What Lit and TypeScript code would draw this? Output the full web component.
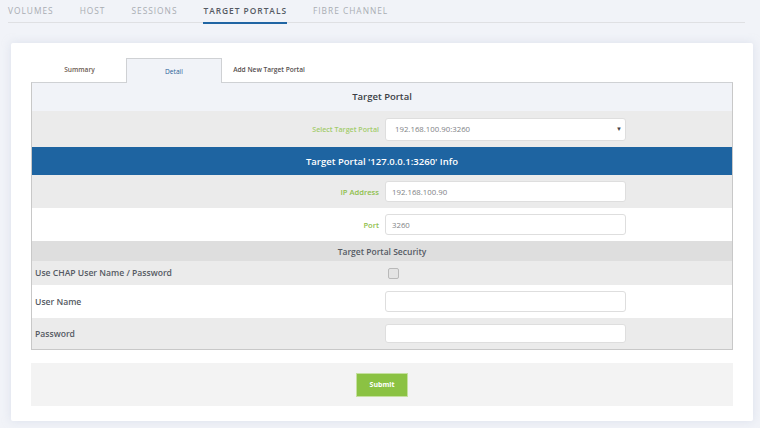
import { LitElement, html, css } from 'lit';
import { customElement, state } from 'lit/decorators.js';

@customElement('app-root')
export class AppRoot extends LitElement {
  @state() navItems = ['VOLUMES', 'HOST', 'SESSIONS', 'TARGET PORTALS', 'FIBRE CHANNEL'];

  static styles = css`
    :host {
      display: block;
      width: 760px;
      height: 428px;
      overflow: hidden;
      background: #f1f3f8;
      font-family: 'Open Sans', sans-serif;
      color: #4a4f5a;
    }
    .nav {
      display: flex;
      gap: 26px;
      margin: 0 15px 0 8px;
      height: 23px;
      border-bottom: 1px solid #dfe0e3;
      box-sizing: border-box;
    }
    .nav-item {
      font-size: 8.4px;
      line-height: 21px;
      letter-spacing: 0.98px;
      color: #a9adb3;
      height: 24px;
      box-sizing: border-box;
    }
    .nav-item.active {
      color: #555a63;
      font-weight: 600;
      border-bottom: 2px solid #2065a3;
    }
    .card {
      margin: 20px 7px 0 11px;
      height: 378px;
      box-sizing: border-box;
      padding: 15px 20px 0;
      background: #fff;
      border-radius: 2px;
      box-shadow: 0 0 8px rgba(200, 208, 225, 0.5);
    }
    .tabs {
      display: flex;
      height: 24px;
      font-size: 6.6px;
      font-weight: 600;
    }
    .tab {
      display: flex;
      align-items: center;
      justify-content: center;
      box-sizing: border-box;
      color: #6b5a50;
    }
    .tab.summary {
      width: 95px;
      padding-bottom: 1px;
      padding-left: 2px;
    }
    .tab.detail {
      width: 96px;
      height: 25px;
      color: #2a5f98;
      font-weight: 400;
      background: #f1f3f8;
      border: 1px solid #cfd1d4;
      border-bottom: none;
      position: relative;
      z-index: 1;
    }
    .tab.add {
      width: 94px;
      color: #55504f;
      white-space: nowrap;
      padding-bottom: 2px;
    }
    .panel {
      width: 702px;
      height: 268px;
      box-sizing: border-box;
      border: 1px solid #c8c8c8;
      border-top: 1px solid #cfd1d4;
    }
    .heading {
      display: flex;
      align-items: center;
      justify-content: center;
      font-weight: 600;
    }
    .title {
      height: 28px;
      padding-bottom: 1px;
      box-sizing: border-box;
      background: #f1f3f8;
      font-size: 9.5px;
      color: #3b3f46;
    }
    .banner {
      height: 28px;
      background: #1e64a1;
      color: #fff;
      font-size: 9.5px;
    }
    .sub {
      height: 20px;
      background: #dedede;
      font-size: 8.5px;
      color: #555a63;
    }
    .row {
      display: grid;
      grid-template-columns: 347px 241px;
      column-gap: 6px;
      align-items: center;
      box-sizing: border-box;
    }
    .row.grey {
      background: #ebebeb;
    }
    .row.white {
      background: #fff;
    }
    .label {
      font-size: 7.6px;
      font-weight: 600;
      text-align: right;
      color: #8fc04c;
    }
    .label.select {
      font-size: 7.1px;
      color: #a3cc6c;
    }
    .label.plain {
      font-size: 8.6px;
      text-align: left;
      padding-left: 3px;
      color: #555a63;
    }
    .field {
      box-sizing: border-box;
      width: 241px;
      padding: 0 5px 0 9px;
      display: flex;
      align-items: center;
      justify-content: space-between;
      background: #fff;
      border: 1px solid #dedede;
      border-radius: 3px;
      font-size: 7.8px;
      color: #808286;
    }
    .field.bare {
      padding: 0 6px;
    }
    .arrow {
      font-size: 6px;
      color: #444;
      margin-right: -2px;
    }
    .check {
      width: 11px;
      height: 11px;
      box-sizing: border-box;
      margin-left: 3px;
      background: #e4e4e4;
      border: 1px solid #b9b9b9;
      border-radius: 2px;
    }
    .actions {
      display: flex;
      justify-content: center;
      align-items: center;
      width: 702px;
      height: 43px;
      margin-top: 13px;
      background: #f3f3f3;
    }
    .submit {
      width: 52px;
      height: 24px;
      box-sizing: border-box;
      display: flex;
      align-items: center;
      justify-content: center;
      background: #8bc243;
      border: 1px solid #c5e09f;
      color: #fff;
      font-size: 7px;
      font-weight: 700;
    }
  `;

  renderRow(label: string, value: string, tone: string, rowH: number, fieldH: number, plain = false) {
    return html`
      <div class="row ${tone}" style="height:${rowH}px">
        <div class="label ${plain ? 'plain' : ''}">${label}</div>
        <div class="field bare" style="height:${fieldH}px">${value}</div>
      </div>
    `;
  }

  render() {
    return html`
      <div class="nav">
        ${this.navItems.map(
          item => html`<div class="nav-item ${item === 'TARGET PORTALS' ? 'active' : ''}">${item}</div>`
        )}
      </div>
      <div class="card">
        <div class="tabs">
          <div class="tab summary">Summary</div>
          <div class="tab detail">Detail</div>
          <div class="tab add">Add New Target Portal</div>
        </div>
        <div class="panel">
          <div class="heading title">Target Portal</div>
          <div class="row grey" style="height:36px">
            <div class="label select">Select Target Portal</div>
            <div class="field" style="height:23px">
              <span>192.168.100.90:3260</span><span class="arrow">▼</span>
            </div>
          </div>
          <div class="heading banner">Target Portal '127.0.0.1:3260' Info</div>
          ${this.renderRow('IP Address', '192.168.100.90', 'grey', 33, 21)}
          ${this.renderRow('Port', '3260', 'white', 33, 21)}
          <div class="heading sub">Target Portal Security</div>
          <div class="row grey" style="height:24px">
            <div class="label plain">Use CHAP User Name / Password</div>
            <div class="check"></div>
          </div>
          ${this.renderRow('User Name', '', 'white', 33, 21, true)}
          ${this.renderRow('Password', '', 'grey', 31, 19, true)}
        </div>
        <div class="actions">
          <div class="submit">Submit</div>
        </div>
      </div>
    `;
  }
}
